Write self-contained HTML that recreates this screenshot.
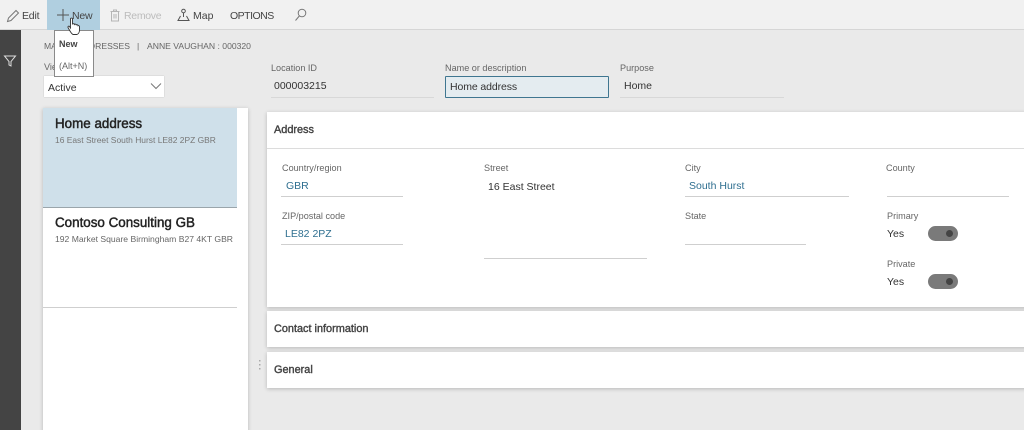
<!DOCTYPE html>
<html><head><meta charset="utf-8"><style>
html,body{margin:0;padding:0;width:1024px;height:430px;overflow:hidden;background:#eaeaea}
body{position:relative;font-family:"Liberation Sans",sans-serif;color:#333}
.a{position:absolute;white-space:nowrap}
.lbl{font-size:9.1px;color:#666;line-height:12px}
.val{font-size:10.5px;line-height:14px;color:#333}
.lnk{color:#2f6f90}
.ln{position:absolute;height:1px;background:#cfcfcf}
.card{position:absolute;background:#fff;box-shadow:0 1px 4px rgba(0,0,0,.22)}
.tg{position:absolute;width:30px;height:15px;border-radius:8px;background:#7a7a7a}
.tg:after{content:"";position:absolute;left:18px;top:4px;width:7px;height:7px;border-radius:50%;background:#444}
.h{font-size:10.9px;color:#444;line-height:14px;-webkit-text-stroke:.4px #444}
.t{font-size:13.4px;line-height:16px;color:#222;-webkit-text-stroke:.45px #222}
.bc{font-size:8.6px;line-height:12px;color:#666}
</style></head><body>
<div class="a" style="left:0;top:0;width:1024px;height:30px;background:#f1f1f1;border-bottom:1px solid #d6d6d6;box-sizing:border-box"></div>
<div class="a" style="left:47px;top:0;width:53px;height:30px;background:#b0cfe0"></div>
<svg class="a" style="left:6px;top:9px" width="14" height="14" viewBox="0 0 14 14" fill="none" stroke="#777" stroke-width="1"><path d="M1.500 12.500l1-3.500L10 1.500l2.500 2.500L5 11.500z"/></svg>
<div class="a val" style="left:22px;top:9px;color:#444;letter-spacing:-.2px">Edit</div>
<svg class="a" style="left:56px;top:8px" width="14" height="14" viewBox="0 0 14 14" stroke="#555" stroke-width="1"><path d="M7 1v12M1 7h12"/></svg>
<div class="a val" style="left:72px;top:9px;color:#444;letter-spacing:-.2px">New</div>
<svg class="a" style="left:109px;top:9px" width="12" height="13" viewBox="0 0 12 13" fill="none" stroke="#b5b5b5"><path d="M2.500 2.500h7v9.500h-7zM1.500 2.500h9M4.500 2.500v-1.500h3v1.500M5 5v4.500M7 5v4.500"/></svg>
<div class="a val" style="left:124px;top:9px;color:#bcbcbc;letter-spacing:-.3px">Remove</div>
<svg class="a" style="left:177px;top:8px" width="13" height="14" viewBox="0 0 13 14" fill="none" stroke="#555"><circle cx="6.500" cy="3" r="1.800"/><path d="M6.500 5v4M3.500 8L1 12.500h11L9.500 8"/></svg>
<div class="a val" style="left:193px;top:9px;color:#444">Map</div>
<div class="a val" style="left:230px;top:9px;color:#444;letter-spacing:-.5px">OPTIONS</div>
<svg class="a" style="left:294px;top:8px" width="13" height="14" viewBox="0 0 13 14" fill="none" stroke="#777"><circle cx="8" cy="5" r="3.800"/><path d="M5.300 8L1.500 12.500"/></svg>

<div class="a" style="left:0;top:30px;width:21px;height:400px;background:#444"></div>
<svg class="a" style="left:3px;top:54px" width="14" height="14" viewBox="0 0 14 14" fill="none" stroke="#ddd"><path d="M1.500 2h11L8 7.500V12L6 11V7.500z"/></svg>

<div class="a bc" style="left:44px;top:40px">MA</div>
<div class="a bc" style="left:94px;top:40px;width:36px;text-align:right;overflow:hidden;direction:rtl">DRESSES</div>
<div class="a bc" style="left:137px;top:40px">|</div>
<div class="a bc" style="left:147px;top:40px">ANNE VAUGHAN : 000320</div>
<div class="a lbl" style="left:44px;top:61px">View</div>
<div class="a" style="left:44px;top:76px;width:120px;height:21px;background:#fff;box-shadow:0 0 1px rgba(0,0,0,.25)"></div>
<div class="a val" style="left:48px;top:81px">Active</div>
<svg class="a" style="left:150px;top:82px" width="12" height="8" viewBox="0 0 12 8" fill="none" stroke="#777"><path d="M1 1.500l5 5 5-5"/></svg>

<div class="a lbl" style="left:271px;top:62px">Location ID</div>
<div class="a val" style="left:274px;top:79px">000003215</div>
<div class="ln" style="left:271px;top:97px;width:163px;background:#d8d8d8"></div>
<div class="a lbl" style="left:445px;top:62px">Name or description</div>
<div class="a" style="left:445px;top:76px;width:164px;height:22px;box-sizing:border-box;background:#e4ecf0;border:1px solid #3f7690;border-radius:1px"></div>
<div class="a val" style="left:450px;top:80px;letter-spacing:-.1px">Home address</div>
<div class="a lbl" style="left:620px;top:62px">Purpose</div>
<div class="a val" style="left:624px;top:79px">Home</div>
<div class="ln" style="left:620px;top:97px;width:164px;background:#d8d8d8"></div>

<!-- Left list -->
<div class="card" style="left:43px;top:108px;width:205px;height:330px"></div>
<div class="a" style="left:43px;top:108px;width:194px;height:100px;background:#cfe0ea;border-bottom:1px solid #9aa5ab;box-sizing:border-box"></div>
<div class="a t" style="left:55px;top:116px">Home address</div>
<div class="a" style="left:55px;top:135px;font-size:8.45px;line-height:11px;color:#777">16 East Street South Hurst LE82 2PZ GBR</div>
<div class="a t" style="left:55px;top:215px">Contoso Consulting GB</div>
<div class="a" style="left:55px;top:234px;font-size:8.6px;line-height:11px;color:#666">192 Market Square Birmingham B27 4KT GBR</div>
<div class="ln" style="left:43px;top:307px;width:194px;background:#cfcfcf"></div>

<!-- Address card -->
<div class="card" style="left:267px;top:112px;width:770px;height:195px"></div>
<div class="a h" style="left:274px;top:123px">Address</div>
<div class="ln" style="left:267px;top:148px;width:757px;background:#dcdcdc"></div>

<div class="a lbl" style="left:282px;top:162px">Country/region</div>
<div class="a val lnk" style="left:286px;top:179px">GBR</div>
<div class="ln" style="left:281px;top:196px;width:122px"></div>
<div class="a lbl" style="left:282px;top:210px">ZIP/postal code</div>
<div class="a val lnk" style="left:285px;top:227px">LE82 2PZ</div>
<div class="ln" style="left:281px;top:244px;width:122px"></div>

<div class="a lbl" style="left:484px;top:162px">Street</div>
<div class="a val" style="left:488px;top:180px">16 East Street</div>
<div class="ln" style="left:484px;top:258px;width:163px"></div>

<div class="a lbl" style="left:685px;top:162px">City</div>
<div class="a val lnk" style="left:689px;top:179px">South Hurst</div>
<div class="ln" style="left:685px;top:196px;width:164px"></div>
<div class="a lbl" style="left:685px;top:210px">State</div>
<div class="ln" style="left:685px;top:244px;width:121px"></div>

<div class="a lbl" style="left:886px;top:162px">County</div>
<div class="ln" style="left:887px;top:196px;width:122px"></div>
<div class="a lbl" style="left:887px;top:210px">Primary</div>
<div class="a val" style="left:887px;top:227px">Yes</div>
<div class="tg" style="left:928px;top:226px"></div>
<div class="a lbl" style="left:887px;top:258px">Private</div>
<div class="a val" style="left:887px;top:275px">Yes</div>
<div class="tg" style="left:928px;top:274px"></div>

<div class="card" style="left:267px;top:311px;width:770px;height:36px"></div>
<div class="a h" style="left:274px;top:322px">Contact information</div>
<div class="card" style="left:267px;top:352px;width:770px;height:36px"></div>
<div class="a h" style="left:274px;top:363px">General</div>
<svg class="a" style="left:258px;top:359px" width="4" height="12" viewBox="0 0 4 12" fill="#aaa"><rect x="1" y="1" width="1.500" height="1.500"/><rect x="1" y="5" width="1.500" height="1.500"/><rect x="1" y="9" width="1.500" height="1.500"/></svg>

<!-- Tooltip -->
<div class="a" style="left:54px;top:30px;width:40px;height:47px;box-sizing:border-box;background:#fff;border:1px solid #8a8a8a"></div>
<div class="a" style="left:59px;top:38px;font-size:9px;line-height:12px;font-weight:bold;color:#444">New</div>
<div class="a" style="left:59px;top:60px;font-size:9px;line-height:12px;color:#666">(Alt+N)</div>
<!-- Cursor -->
<svg class="a" style="left:67px;top:17px" width="14" height="18" viewBox="0 0 14 18"><path d="M3.500 2c0-1.300 2-1.300 2 0v5l1-.3c.8 0 1 .4 1 .7.500-.5 1.700-.3 1.800.5.600-.4 1.700-.1 1.700.8.500-.3 1.500 0 1.500 1V13c0 2-1 4-2.500 4.500H6c-1.200-.5-2-1.800-3-3.500L1 10.500c-.5-1 .8-1.800 1.500-1L3.500 11z" fill="#fff" stroke="#333" stroke-width=".9"/></svg>
</body></html>
